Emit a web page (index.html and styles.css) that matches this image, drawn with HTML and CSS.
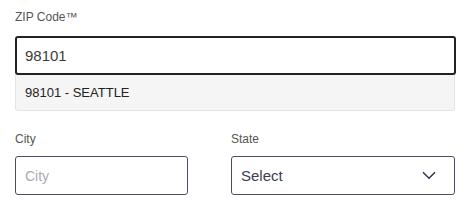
FILE: index.html
```html
<!DOCTYPE html>
<html>
<head>
  <meta name="viewport" content="width=device-width, initial-scale=1">
  <meta charset="UTF-8">
  <link rel="stylesheet" href="styles.css">
</head>
<body>
  <div class="address-form">
    <label class="field-label">ZIP Code&trade;</label>
    <div class="zip-field">
      <input type="text" class="zip-input" value="98101">
      <div class="suggest-list">
        <div class="suggest-item">98101 - SEATTLE</div>
      </div>
    </div>
    <div class="row">
      <div class="col">
        <label class="field-label">City</label>
        <input type="text" class="text-input" placeholder="City">
      </div>
      <div class="col">
        <label class="field-label">State</label>
        <div class="select-box">
          <span>Select</span>
          <svg class="chevron" width="14" height="9" viewBox="0 0 14 9">
            <path d="M1 1.2 L7 7.2 L13 1.2" fill="none" stroke="#33334d" stroke-width="1.5"/>
          </svg>
        </div>
      </div>
    </div>
  </div>
</body>
</html>
```

FILE: styles.css
```css
html, body {
  margin: 0;
  padding: 0;
  background-color: #FFFFFF;
  font-family: "Liberation Sans", Arial, sans-serif;
}

.address-form {
  width: 441px;
  padding: 10px 0 0 15px;
}

.field-label {
  display: block;
  font-size: 12px;
  line-height: 14px;
  color: #555555;
}

.zip-field {
  margin-top: 12px;
}

.zip-input {
  display: block;
  box-sizing: border-box;
  width: 441px;
  height: 39px;
  margin: 0;
  padding: 0 8px;
  border: 2px solid #222222;
  border-radius: 3px;
  font-family: "Liberation Sans", Arial, sans-serif;
  font-size: 15px;
  color: #3c3c3c;
  outline: none;
}

.suggest-list {
  box-sizing: border-box;
  width: 440px;
  background-color: #F5F5F5;
  border: 1px solid #E3E3E3;
  border-top: none;
  border-radius: 0 0 3px 3px;
}

.suggest-item {
  height: 35px;
  line-height: 36px;
  padding-left: 9px;
  font-size: 13px;
  color: #222222;
}

.row {
  display: grid;
  grid-template-columns: 173px 224px;
  column-gap: 43px;
  margin-top: 21px;
}

.col .field-label {
  margin-bottom: 10px;
}

.text-input {
  display: block;
  box-sizing: border-box;
  width: 173px;
  height: 39px;
  margin: 0;
  padding: 0 9px;
  border: 1px solid #4d4d6b;
  border-radius: 3px;
  font-family: "Liberation Sans", Arial, sans-serif;
  font-size: 14px;
  color: #333333;
}

.text-input::placeholder {
  color: #AAAAB4;
}

.select-box {
  box-sizing: border-box;
  height: 39px;
  display: flex;
  align-items: center;
  justify-content: space-between;
  padding: 0 18px 0 9px;
  border: 1px solid #4d4d6b;
  border-radius: 3px;
  font-size: 15px;
  color: #3d3d4f;
}
```
